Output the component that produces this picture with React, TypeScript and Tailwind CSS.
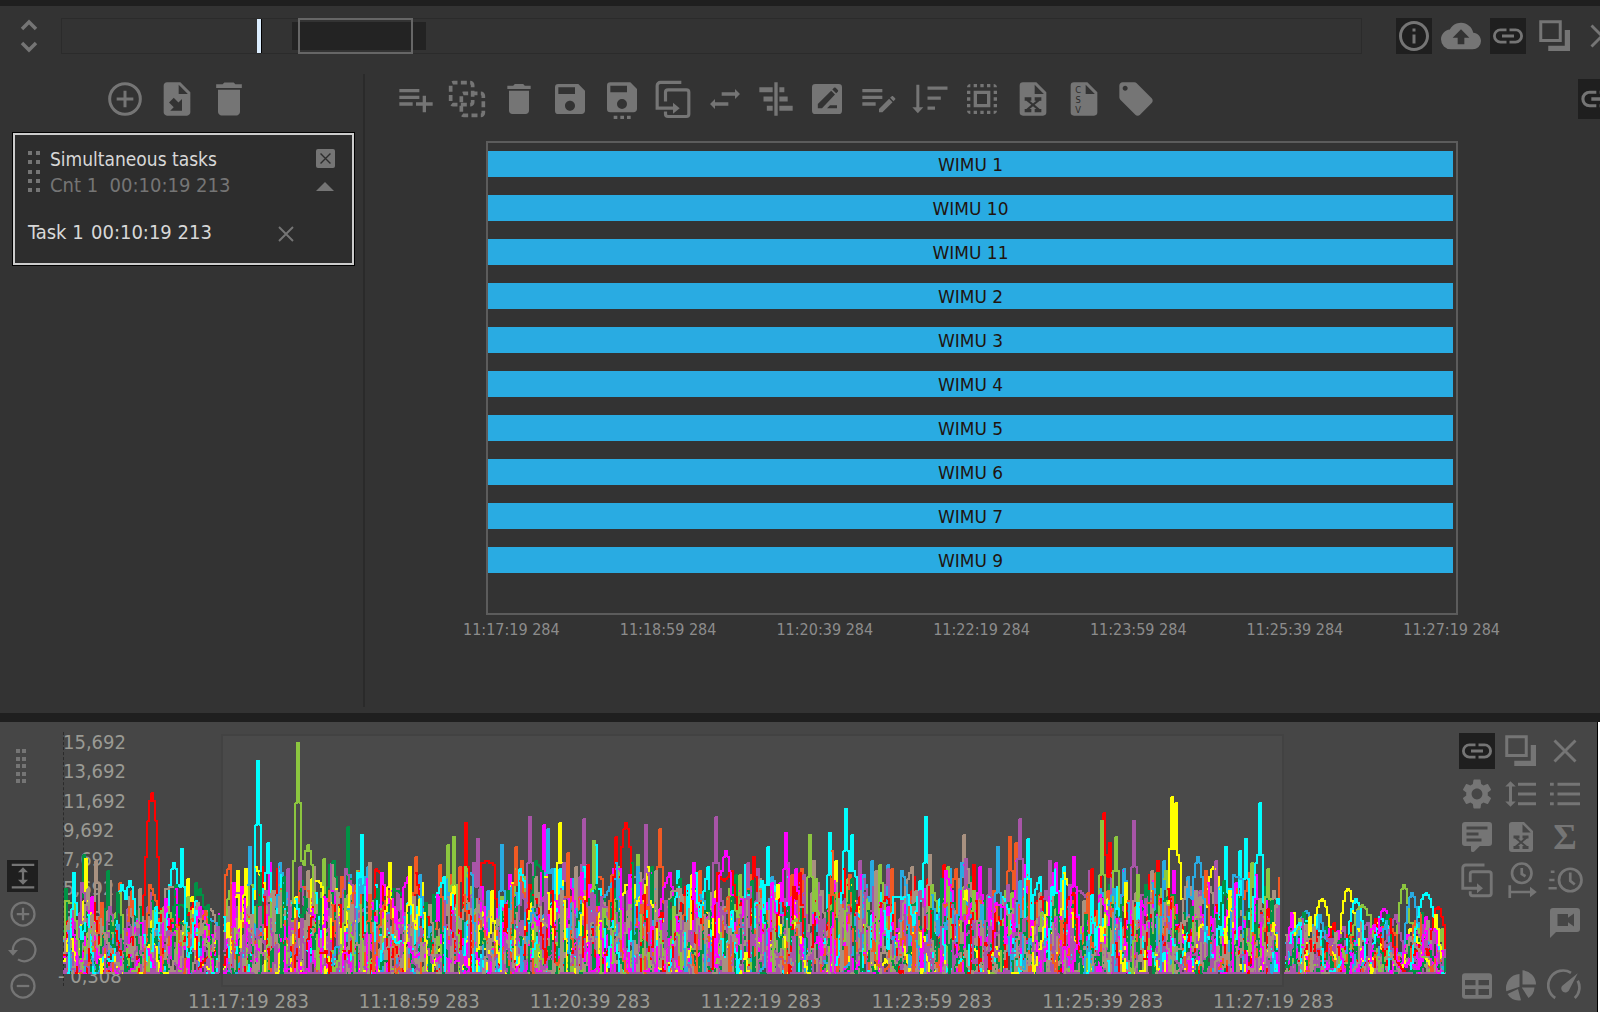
import React from 'react';
import clsx from 'clsx';
import { MdInfoOutline, MdSettings, MdSelectAll, MdDelete, MdSave, MdLocalOffer } from 'react-icons/md';

const paths = {
  playlistAdd: 'M14 10H2v2h12v-2zm0-4H2v2h12V6zm4 8v-4h-2v4h-4v2h4v4h2v-4h4v-2h-4zM2 16h8v-2H2v2z',
  playlistEdit:
    'M2,6V8H14V6H2M2,10V12H14V10H2M20.04,10.13C19.9,10.13 19.76,10.19 19.65,10.3L18.65,11.3L20.7,13.35L21.7,12.35C21.92,12.14 21.92,11.79 21.7,11.58L20.42,10.3C20.31,10.19 20.18,10.13 20.04,10.13M18.07,11.88L12,17.94V20H14.06L20.12,13.93L18.07,11.88M2,14V16H10V14H2Z',
  cloudUpload:
    'M14,13V17H10V13H7L12,8L17,13M19.35,10.03C18.67,6.59 15.64,4 12,4C9.11,4 6.6,5.64 5.35,8.03C2.34,8.36 0,10.9 0,14A6,6 0 0,0 6,20H19A5,5 0 0,0 24,15C24,12.36 21.95,10.22 19.35,10.03Z',
  link: 'M3.9,12C3.9,10.29 5.29,8.9 7,8.9H11V7H7A5,5 0 0,0 2,12A5,5 0 0,0 7,17H11V15.1H7C5.29,15.1 3.9,13.71 3.9,12M8,13H16V11H8V13M17,7H13V8.9H17C18.71,8.9 20.1,10.29 20.1,12C20.1,13.71 18.71,15.1 17,15.1H13V17H17A5,5 0 0,0 22,12A5,5 0 0,0 17,7Z',
  fileExcel:
    'M14,2H6A2,2 0 0,0 4,4V20A2,2 0 0,0 6,22H18A2,2 0 0,0 20,20V8L14,2M17,11H13V13H14L12,14.67L10,13H11V11H7V13H8L11,15.5L8,18H7V20H11V18H10L12,16.33L14,18H13V20H17V18H16L13,15.5L16,13H17V11M13,9V3.5L18.5,9H13Z',
  fileImport:
    'M14,2H6C4.89,2 4,2.9 4,4V20C4,21.11 4.89,22 6,22H18C19.11,22 20,21.11 20,20V8L14,2M13,3.5L18.5,9H13V3.5M10.05,11.22L12.88,14.05L15,11.93V19H7.93L10.05,16.88L7.22,14.05L10.05,11.22Z',
  file: 'M14,2H6A2,2 0 0,0 4,4V20A2,2 0 0,0 6,22H18A2,2 0 0,0 20,20V8L14,2M13,9V3.5L18.5,9H13Z',
  swap: 'M21 9l-3-3v2h-8v2h8v2l3-3zM3 15l3-3v2h8v2H6v2l-3-3z',
  align: 'M11 2h2v20h-2zM2 5h8v3H2zM4.500 10.500h5.500v3H4.500zM6.500 16h3.500v3H6.500zM14 5h3v3h-3zM14 10.500h5v3h-5zM14 16h8v3h-8z',
  editBox:
    'M5 3h14a2 2 0 0 1 2 2v14a2 2 0 0 1-2 2H5a2 2 0 0 1-2-2V5a2 2 0 0 1 2-2zM6.500 15v2.500H9L16.800 9.300L14.500 7zM15.200 6.300l2.300 2.300l1-1a.8.8 0 0 0 0-1l-1.300-1.300a.8.8 0 0 0-1 0zM12 17.500h6v-1.800h-4.200z',
  sort: 'M3.800 3.500h1.800V17H8l-3.300 3.500L1.400 17h2.400zM10.500 4.500h12v2h-12zM10.500 10.500h8v2h-8zM10.500 16.500h4.500v2h-4.500z',
  lineSpacing: 'M6 7h2.500L5 3.500 1.500 7H4v10H1.500L5 20.500 8.500 17H6V7zm4-2.500v2h12v-2H10zm0 15h12v-2H10v2zm0-6.500h12v-2H10v2z',
  list: 'M2 4.500h2.500v2H2zM2 11h2.500v2H2zM2 17.500h2.500v2H2zM7 4.500h15v2H7zM7 11h15v2H7zM7 17.500h15v2H7z',
  comment:
    'M9,22A1,1 0 0,1 8,21V18H4A2,2 0 0,1 2,16V4C2,2.89 2.9,2 4,2H20A2,2 0 0,1 22,4V16A2,2 0 0,1 20,18H13.9L10.2,21.71C10,21.9 9.75,22 9.5,22H9M5,5V7H19V5H5M5,9V11H13V9H5M5,13V15H15V13H5Z',
  videoComment: 'M4 2h16a2 2 0 0 1 2 2v12a2 2 0 0 1-2 2H6l-4 4V4a2 2 0 0 1 2-2zM7 6v8h7v-2.500l4 2.800V5.700l-4 2.800V6z',
  table:
    'M4 3.500h16a2 2 0 0 1 2 2v13a2 2 0 0 1-2 2H4a2 2 0 0 1-2-2v-13a2 2 0 0 1 2-2zM4 8v3.500h7V8zM13 8v3.500h7V8zM4 14v4h7v-4zM13 14v4h7v-4z',
  pie: 'M13 1.500a9.500 9.500 0 0 1 9 9.500h-9zM11 4v8.500l-8.800 3A9.500 9.500 0 0 1 11 4zM3 17.300l7-3.300 2 7.500a9 9 0 0 1-9-4.200zM12.500 13h8.500a9 9 0 0 1-4 7z',
};

type IconName = keyof typeof paths;

const Icon: React.FC<{ name: IconName; className?: string }> = ({ name, className = 'size-10' }) => (
  <svg viewBox="0 0 24 24" fill="currentColor" fillRule="evenodd" className={clsx('shrink-0', className)}>
    <path d={paths[name]} />
  </svg>
);

const Stroked: React.FC<{ className?: string; width?: number; children: React.ReactNode }> = ({
  className = 'size-10',
  width = 2,
  children,
}) => (
  <svg viewBox="0 0 24 24" fill="none" stroke="currentColor" strokeWidth={width} className={clsx('shrink-0', className)}>
    {children}
  </svg>
);

const CircleIcon: React.FC<{ minus?: boolean; className?: string }> = ({ minus, className }) => (
  <Stroked className={className} width={1.8}>
    <circle cx="12" cy="12" r="9.200" />
    <path d={minus ? 'M7 12h10' : 'M7 12h10M12 7v10'} />
  </Stroked>
);

const CopyInto: React.FC<{ className?: string }> = ({ className }) => (
  <Stroked className={className} width={1.9}>
    <path d="M17 2H4.500a2 2 0 0 0-2 2v13.500H13" />
    <path d="M7.500 13.500V8a1.500 1.500 0 0 1 1.500-1.500h11a1.500 1.500 0 0 1 1.500 1.500v13a1.500 1.500 0 0 1-1.500 1.500H9A1.500 1.500 0 0 1 7.500 21v-1.500" />
    <path d="M12 14.200v6.600l4-3.300z" fill="currentColor" stroke="none" />
  </Stroked>
);

const Windows: React.FC = () => (
  <svg viewBox="0 0 24 24" fill="none" className="size-9 shrink-0">
    <rect x="2.500" y="2.500" width="13" height="12.500" stroke="currentColor" strokeWidth="2" />
    <path d="M18.500 8H22v14H7.500v-3.500h11z" fill="currentColor" />
  </svg>
);

const Cross: React.FC<{ className?: string }> = ({ className = 'size-9' }) => (
  <Stroked className={className} width={1.9}>
    <path d="M5 5l14 14M19 5L5 19" />
  </Stroked>
);

const Grip: React.FC<{ className?: string }> = ({ className }) => (
  <span className={clsx('grid grid-cols-2', className)}>
    {Array.from({ length: 10 }, (_, i) => (
      <i key={i} className="size-1 bg-[#757575]" />
    ))}
  </span>
);

const ToolButton: React.FC<{ label: string; className?: string; children: React.ReactNode }> = ({
  label,
  className = 'size-10',
  children,
}) => (
  <button aria-label={label} className={clsx('flex shrink-0 items-center justify-center', className)}>
    {children}
  </button>
);

const toolbar: { label: string; icon: React.ReactNode }[] = [
  { label: 'Add', icon: <Icon name="playlistAdd" /> },
  {
    label: 'Group',
    icon: (
      <Stroked width={2.2}>
        <rect x="2.200" y="2.200" width="13.200" height="13.200" rx="1.500" strokeDasharray="3.600 2" strokeDashoffset="1" />
        <rect x="8.600" y="8.600" width="13.200" height="13.200" rx="1.500" strokeDasharray="3.600 2" strokeDashoffset="1" />
      </Stroked>
    ),
  },
  { label: 'Delete', icon: <MdDelete className="size-10" /> },
  { label: 'Save', icon: <MdSave className="size-10" /> },
  {
    label: 'Save as',
    icon: (
      <svg viewBox="0 0 24 24" fill="currentColor" className="size-10">
        <path d="M17 2H5a2 2 0 0 0-2 2v14a2 2 0 0 0 2 2h14c1.100 0 2-.9 2-2V6l-4-4zm-5 16a3 3 0 1 1 0-6 3 3 0 0 1 0 6zm3-10H5V4h10v4z" />
        <path d="M7 22h2.200v2H7zM11 22h2.200v2H11zM15 22h2.200v2H15z" />
      </svg>
    ),
  },
  { label: 'Copy into', icon: <CopyInto /> },
  { label: 'Swap', icon: <Icon name="swap" /> },
  { label: 'Align', icon: <Icon name="align" /> },
  { label: 'Rename', icon: <Icon name="editBox" /> },
  { label: 'Edit list', icon: <Icon name="playlistEdit" /> },
  { label: 'Sort', icon: <Icon name="sort" /> },
  { label: 'Select all', icon: <MdSelectAll className="size-10" /> },
  { label: 'Export to Excel', icon: <Icon name="fileExcel" /> },
  {
    label: 'Export to CSV',
    icon: (
      <svg viewBox="0 0 24 24" className="size-10">
        <path d={paths.file} fill="currentColor" fillRule="evenodd" />
        <g fill="#2b2b2b" fontFamily="DejaVu Sans" fontSize="5" textAnchor="middle">
          <text x="8.500" y="8.500">C</text>
          <text x="8.500" y="14.500">S</text>
          <text x="8.500" y="20.500">V</text>
        </g>
      </svg>
    ),
  },
  { label: 'Tag', icon: <MdLocalOffer className="size-10" /> },
];

const devices = ['WIMU 1', 'WIMU 10', 'WIMU 11', 'WIMU 2', 'WIMU 3', 'WIMU 4', 'WIMU 5', 'WIMU 6', 'WIMU 7', 'WIMU 9'];
const hours = ['11:17:19', '11:18:59', '11:20:39', '11:22:19', '11:23:59', '11:25:39', '11:27:19'];
const levels = ['15,692', '13,692', '11,692', '9,692', '7,692', '5,692', '3,692', '1,692', '- 0,308'];

const chartTools: { label: string; icon: React.ReactNode; active?: boolean }[] = [
  { label: 'Link', icon: <Icon name="link" className="size-9" />, active: true },
  { label: 'Detach', icon: <Windows /> },
  { label: 'Close', icon: <Cross /> },
  { label: 'Settings', icon: <MdSettings className="size-9" /> },
  { label: 'Line spacing', icon: <Icon name="lineSpacing" className="size-9" /> },
  { label: 'List', icon: <Icon name="list" className="size-9" /> },
  { label: 'Comments', icon: <Icon name="comment" className="size-9" /> },
  { label: 'Export', icon: <Icon name="fileExcel" className="size-9" /> },
  { label: 'Sum', icon: <span className="font-['Liberation_Serif',serif] text-4xl font-bold leading-9">Σ</span> },
  { label: 'Copy', icon: <CopyInto className="size-9" /> },
  {
    label: 'Time range',
    icon: (
      <Stroked className="size-9" width={1.8}>
        <circle cx="12.500" cy="7.500" r="6.500" />
        <path d="M12.500 4v4l2.500 1.500M4.500 15.500V24M4.500 20H19" />
        <path d="M18 16.500v7l4.500-3.500z" fill="currentColor" stroke="none" />
      </Stroked>
    ),
  },
  {
    label: 'Speed',
    icon: (
      <Stroked className="size-9" width={1.8}>
        <circle cx="15.500" cy="12" r="7.500" />
        <path d="M15.500 7v5.500l3 2.500M2.500 6.500H5M1.500 12H5M1 17.500h5.500" />
      </Stroked>
    ),
  },
];

const bottomTools: { label: string; icon: React.ReactNode }[] = [
  { label: 'Table', icon: <Icon name="table" className="size-9" /> },
  { label: 'Pie', icon: <Icon name="pie" className="size-9" /> },
  {
    label: 'Gauge',
    icon: (
      <Stroked className="size-9" width={1.8}>
        <path d="M5.500 20A9.500 9.500 0 0 1 16 3.200M20.500 8.500A9.500 9.500 0 0 1 18.500 20" />
        <path d="M20.500 3.500L14.500 15.200a2.700 2.700 0 1 1-4.500-3.200z" fill="currentColor" stroke="none" />
      </Stroked>
    ),
  },
];

// ---- signal chart ----
const C = {
  cyan: '#00ffff',
  green: '#009245',
  lime: '#8cc63f',
  red: '#ff0000',
  yellow: '#ffff00',
  magenta: '#ff00ff',
  purple: '#a855a8',
  tan: '#a89180',
  orange: '#f15a24',
  blue: '#29abe2',
};
type Color = keyof typeof C;

const BASE = 251;
const STEP = 2;
const COLUMNS = 692;

// [x, top, colour, half width]
const peaks: [number, number, Color, number?][] = [
  [87, 71, 'red', 9], [193, 40, 'cyan', 5], [234, 22, 'lime', 6], [117, 128, 'cyan', 5], [109, 142, 'cyan', 8], [204, 121, 'cyan', 7],
  [243, 123, 'lime', 9], [259, 138, 'lime', 5], [9, 152, 'cyan'], [19, 133, 'green'], [22, 137, 'yellow'], [31, 140, 'tan'],
  [43, 150, 'green'], [66, 160, 'cyan', 8], [57, 164, 'cyan', 8], [186, 126, 'blue', 5], [163, 148, 'orange'], [215, 145, 'orange'],
  [250, 145, 'tan'], [145, 188, 'tan', 12], [152, 204, 'tan', 9], [123, 158, 'yellow', 7], [136, 168, 'green', 8],
  [283, 105, 'green'], [297, 114, 'cyan'], [306, 150, 'blue'], [318, 152, 'magenta'], [351, 136, 'orange', 5], [345, 145, 'yellow'],
  [376, 143, 'orange', 5], [384, 124, 'lime'], [390, 115, 'lime'], [401, 101, 'red', 5], [413, 117, 'purple'], [437, 123, 'blue'],
  [452, 125, 'orange', 5], [458, 139, 'orange'], [466, 95, 'purple', 5], [479, 104, 'magenta', 5], [483, 108, 'blue', 5],
  [495, 102, 'yellow', 6], [503, 132, 'orange'], [519, 97, 'purple', 5], [529, 119, 'lime'], [532, 123, 'cyan'], [551, 115, 'red', 5],
  [561, 102, 'red', 9], [573, 134, 'lime'], [582, 104, 'purple'], [596, 108, 'orange', 6], [614, 149, 'cyan', 6], [631, 152, 'cyan', 5],
  [651, 95, 'purple', 5], [662, 130, 'magenta', 9], [690, 135, 'red'], [703, 125, 'cyan', 5], [721, 112, 'magenta', 6],
  [745, 114, 'lime', 5], [737, 147, 'orange', 6], [765, 112, 'cyan', 5], [768, 129, 'orange'], [782, 88, 'cyan', 6],
  [787, 114, 'cyan', 6], [796, 139, 'purple'], [807, 139, 'blue'], [824, 143, 'blue'], [861, 95, 'cyan', 5], [866, 133, 'tan', 6],
  [886, 147, 'blue'], [899, 114, 'tan', 5], [902, 138, 'purple', 6], [934, 125, 'blue'], [946, 115, 'orange', 6], [951, 121, 'orange'],
  [956, 97, 'purple', 6], [963, 117, 'cyan', 5], [985, 139, 'purple'], [991, 147, 'cyan', 6], [1009, 136, 'magenta', 6],
  [1037, 99, 'lime'], [1040, 91, 'red', 6], [1046, 121, 'red', 6], [1052, 115, 'lime', 6], [1069, 99, 'purple', 5],
  [1093, 139, 'red', 5], [1107, 75, 'yellow', 5], [1112, 82, 'yellow', 5], [1082, 163, 'green', 5], [1133, 136, 'blue', 9],
  [1150, 145, 'yellow', 12], [1123, 160, 'tan', 8], [1162, 125, 'cyan'], [1175, 130, 'cyan'], [1181, 117, 'cyan', 5],
  [1196, 82, 'cyan', 5], [1143, 163, 'tan', 12], [1217, 176, 'blue', 5], [1241, 189, 'blue', 12], [1257, 178, 'yellow', 12],
  [1284, 167, 'yellow', 10], [1292, 178, 'cyan', 10], [1298, 183, 'lime', 14], [1319, 187, 'magenta', 9], [1339, 163, 'lime', 8],
  [1347, 172, 'blue', 9], [1361, 172, 'cyan', 14], [1374, 185, 'red', 9],
];

// [start, end, height, shortest knot gap, longest knot gap], in columns
const spans: [number, number, number, number, number][] = [
  [0, 78, 92, 2, 4],
  [80, 608, 112, 1, 4],
  [611, 691, 62, 1, 5],
];

const order: Color[] = [
  'blue', 'orange', 'lime', 'red', 'yellow', 'green', 'cyan', 'magenta', 'tan', 'purple',
  'purple', 'tan', 'green', 'purple', 'magenta', 'tan',
];

const makeRandom = (seed: number) => () => {
  seed = (seed * 1664525 + 1013904223) % 4294967296;
  return seed / 4294967296;
};

const peakHeight = (color: Color, x: number) =>
  peaks.reduce((best, [px, top, c, half = 4]) => {
    const t = Math.abs(x - Math.round(px / STEP) * STEP) / (half + 1);
    if (c !== color || t >= 1) return best;
    return Math.max(best, (BASE - top) * (half > 7 ? 1 - t * t : 1 - t * 0.9));
  }, 0);

const traces = (() => {
  const random = makeRandom(17);
  const series = order.map((color, n) => {
    const values: number[] = new Array(COLUMNS).fill(0);
    spans.forEach(([from, to, height, min, max]) => {
      let at = from;
      let last = 0;
      while (at < to) {
        const gap = Math.round(min + random() * (max - min));
        const limit = n < 10 ? height : height * 0.75;
        const next = Math.max(0, Math.pow(random(), 1.7) * (limit + 12) - 12);
        for (let i = 0; i < gap && at + i <= to; i++) values[at + i] = last + ((next - last) * (i + 1)) / gap;
        at += gap;
        last = next;
      }
    });
    return n < 10 ? values.map((v, i) => Math.max(v, peakHeight(color, i * STEP))) : values;
  });

  // The stacking order changes every few columns, so that no series hides the rest.
  const out: { d: string; color: string }[] = [];
  const y = (v: number) => BASE - Math.round(v / 2) * 2;
  spans.forEach(([from, to]) => {
    for (let at = from; at < to; at += 2) {
      const end = Math.min(at + 2, to);
      const turn = Math.floor(random() * order.length);
      order.forEach((_, i) => {
        const n = (i * 5 + turn) % order.length;
        let d = `M${at * STEP} ${y(series[n][at])}`;
        for (let k = at + 1; k <= end; k++) d += `H${k * STEP}V${y(series[n][k])}`;
        out.push({ d, color: C[order[n]] });
      });
    }
  });
  return out;
})();

const SignalChart: React.FC = () => (
  <svg
    viewBox="0 0 1383 267"
    preserveAspectRatio="none"
    shapeRendering="crispEdges"
    className="h-[267px] w-full [grid-area:1/1]"
    fill="none"
    strokeWidth="2"
  >
    {traces.map((t, i) => (
      <path key={i} d={t.d} stroke={t.color} />
    ))}
    <path d={`M60 ${BASE}H156M175 ${BASE}H1217M1221 ${BASE}H1383`} stroke={C.purple} strokeDasharray="14 9" />
  </svg>
);

const App: React.FC = () => {
  return (
    <div className="flex min-h-screen flex-col overflow-hidden border-t-[6px] border-[#1f1f1f] bg-[#333333] font-['DejaVu_Sans_Condensed','DejaVu_Sans',sans-serif] text-[#757575]">
      <header className="-mr-5 flex items-center pt-3">
        <div className="flex w-[61px] shrink-0 flex-col items-center gap-2 pr-[3px]">
          {['M2 11L9 4L16 11', 'M2 3L9 10L16 3'].map((d, i) => (
            <button key={d} aria-label={i ? 'Expand' : 'Collapse'}>
              <svg viewBox="0 0 18 14" className="h-[14px] w-[18px]" fill="none" stroke="currentColor" strokeWidth="3.500">
                <path d={d} />
              </svg>
            </button>
          ))}
        </div>
        <div className="relative h-9 flex-1 border border-[#2b2b2b]">
          <i className="absolute inset-y-0 left-[15%] w-[5px] border-r border-black bg-[#dceeff]" />
          <i className="absolute inset-y-[3px] left-[17.700%] w-[10.300%] bg-[#232323]" />
          <i className="absolute -inset-y-px left-[18.200%] w-[8.800%] border-2 border-[#666666]" />
        </div>
        <div className="ml-[34px] flex items-center gap-[11px]">
          <ToolButton label="Info" className="size-9 bg-[#1f1f1f]">
            <MdInfoOutline className="size-9" />
          </ToolButton>
          <ToolButton label="Upload" className="size-9">
            <Icon name="cloudUpload" />
          </ToolButton>
          <ToolButton label="Link" className="size-9 bg-[#1f1f1f]">
            <Icon name="link" className="size-9" />
          </ToolButton>
          <ToolButton label="Detach" className="size-9">
            <Windows />
          </ToolButton>
          <ToolButton label="Close" className="size-9">
            <Cross />
          </ToolButton>
        </div>
      </header>

      <main className="mt-5 mb-[6px] flex flex-1">
        <aside className="w-[365px] shrink-0 border-r-2 border-[#2a2a2a] pt-[5px]">
          <div className="flex justify-center gap-3 pr-[9px]">
            <ToolButton label="Add task">
              <CircleIcon />
            </ToolButton>
            <ToolButton label="Import task">
              <Icon name="fileImport" />
            </ToolButton>
            <ToolButton label="Delete task">
              <MdDelete className="size-11 shrink-0" />
            </ToolButton>
          </div>
          <div className="mt-[14px] mr-[9px] ml-[13px] border-2 border-[#cccccc] bg-[#2d2d2d] pt-[11px] pr-[17px] pb-[17px] pl-[13px] text-[20px] leading-[26px] outline-1 outline-black">
            <div className="flex">
              <Grip className="mt-[5px] h-[41px] w-[15px] content-between justify-between" />
              <div className="ml-[7px] flex-1">
                <h2 className="text-[19px] text-[#d8d8d8]">Simultaneous tasks</h2>
                <p className="whitespace-pre">Cnt 1  00:10:19 213</p>
              </div>
              <div className="flex w-5 flex-col items-center pt-[3px]">
                <button aria-label="Remove group" className="flex size-[19px] items-center justify-center rounded-xs bg-[#757575] text-[#2d2d2d]">
                  <Cross className="size-[17px]" />
                </button>
                <button aria-label="Fold">
                  <svg viewBox="0 0 18 9" className="mt-[14px] h-[9px] w-[18px]" fill="currentColor">
                    <path d="M9 0L18 9H0z" />
                  </svg>
                </button>
              </div>
            </div>
            <div className="mt-5 flex items-center text-[#d8d8d8]">
              <span className="w-[63px]">Task 1</span>
              <span className="flex-1">00:10:19 213</span>
              <button aria-label="Remove task" className="mr-[37px] pt-1 text-[#757575]">
                <Cross className="size-6" />
              </button>
            </div>
          </div>
        </aside>

        <section className="min-w-0 flex-1 pt-[5px]">
          <div className="flex justify-between">
            <div className="ml-[31px] flex w-[760px] max-w-full justify-between">
              {toolbar.map((t) => (
                <ToolButton key={t.label} label={t.label}>
                  {t.icon}
                </ToolButton>
              ))}
            </div>
            <ToolButton label="Link view" className="-mr-[18px] size-10 bg-[#1f1f1f]">
              <Icon name="link" />
            </ToolButton>
          </div>
          <ul className="mt-[22px] mr-[142px] ml-[121px] flex flex-col gap-[18px] border-2 border-[#5c5c5c] pt-2 pr-[3px] pb-10">
            {devices.map((d) => (
              <li key={d} className="h-[26px] bg-[#29abe2] text-center font-['DejaVu_Sans',sans-serif] text-[17px] leading-[28px] text-[#20140f]">
                {d}
              </li>
            ))}
          </ul>
          <div className="mt-[5px] mr-[100px] ml-[98px] flex justify-between text-base leading-5 text-[#8c8c8c]">
            {hours.map((h) => (
              <span key={h}>{h} 284</span>
            ))}
          </div>
        </section>
      </main>

      <footer className="flex border-t-[9px] border-[#1f1f1f] bg-[#464646]">
        <div className="flex w-[63px] shrink-0 flex-col items-start pt-[27px] pl-[7px]">
          <Grip className="ml-[9px] h-[34px] w-3 content-between justify-between" />
          <div className="mt-[77px] flex w-[31px] flex-col items-center gap-[7px]">
            <ToolButton label="Fit height" className="h-8 w-[31px] bg-[#1f1f1f]">
              <Stroked className="size-[30px]" width={1.8}>
                <path d="M3 3h18M3 21h18M12 7v10" />
                <path d="M12 5l4 4H8zM12 19l4-4H8z" fill="currentColor" stroke="none" />
              </Stroked>
            </ToolButton>
            <ToolButton label="Zoom in" className="size-[29px]">
              <CircleIcon className="size-[30px]" />
            </ToolButton>
            <ToolButton label="Reset zoom" className="size-[29px]">
              <Stroked className="size-[30px]" width={1.8}>
                <path d="M4 13A9 9 0 1 1 8 19.500" />
                <path d="M0 12h8l-4 4.500z" fill="currentColor" stroke="none" />
              </Stroked>
            </ToolButton>
            <ToolButton label="Zoom out" className="size-[29px]">
              <CircleIcon minus className="size-[30px]" />
            </ToolButton>
          </div>
        </div>

        <div className="min-w-0 flex-1 text-[20px] text-[#9a9a94]">
          <div className="grid">
            <div className="mt-3 mr-[11.700%] mb-[2px] ml-[11.400%] border-2 border-[#424242] bg-[#4a4a4a] [grid-area:1/1]" />
            <div className="mt-[10px] flex h-[254px] w-20 flex-col justify-between border-l border-dashed border-[#2b2b2b] leading-5 [grid-area:1/1]">
              {levels.map((l) => (
                <span key={l} className="-ml-px last:-ml-[6px]">
                  {l}
                </span>
              ))}
            </div>
            <SignalChart />
          </div>
          <div className="mt-[2px] mr-28 ml-[125px] flex justify-between leading-[21px]">
            {hours.map((h) => (
              <span key={h}>{h} 283</span>
            ))}
          </div>
        </div>

        <div className="ml-[13px] flex shrink-0 flex-col justify-between border-r border-black pt-[11px] pr-[14px] pb-2">
          <div className="grid grid-cols-3 gap-x-2 gap-y-[7px]">
            {chartTools.map((t) => (
              <ToolButton key={t.label} label={t.label} className={clsx('size-9', t.active && 'bg-[#1f1f1f]')}>
                {t.icon}
              </ToolButton>
            ))}
            <ToolButton label="Video note" className="col-start-3 size-9">
              <Icon name="videoComment" className="size-9" />
            </ToolButton>
          </div>
          <div className="grid grid-cols-3 gap-x-2">
            {bottomTools.map((t) => (
              <ToolButton key={t.label} label={t.label} className="size-9">
                {t.icon}
              </ToolButton>
            ))}
          </div>
        </div>
        <i className="w-[2px] shrink-0 bg-white" />
      </footer>
    </div>
  );
};

export default App;
